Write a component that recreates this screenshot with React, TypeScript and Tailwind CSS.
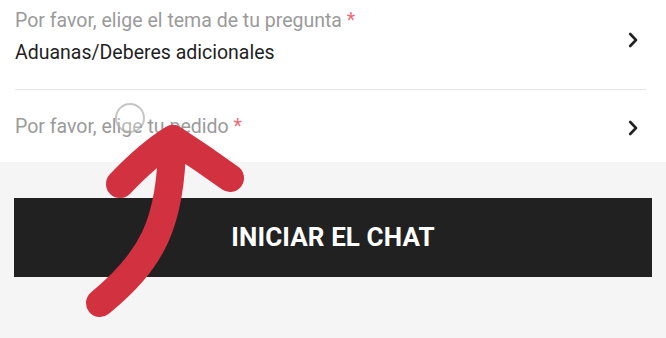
import React from 'react';

const Chevron = () => (
  <svg width="10" height="16" viewBox="0 0 10 16" className="shrink-0">
    <path d="M2.2 2 L8 8 L2.2 14" fill="none" stroke="#222" strokeWidth="2.6" strokeLinecap="round" strokeLinejoin="round" />
  </svg>
);

export default function App() {
  return (
    <div className="relative w-[666px] h-[338px] overflow-hidden bg-[#f5f5f5]" style={{ fontFamily: 'Roboto, "Liberation Sans", sans-serif' }}>
      {/* Form fields */}
      <div className="bg-white pl-[15px] pr-[20px]">
        <div className="flex items-center border-b border-[#e6e6e6] pt-[8px] pb-[23px]">
          <div className="flex-1">
            <div className="text-[19.5px] leading-[26px] text-[#9a9a9a]">
              Por favor, elige el tema de tu pregunta <span className="text-[#ef6b78]">*</span>
            </div>
            <div className="mt-[6px] text-[19.5px] leading-[26px] text-[#1f1f1f]">Aduanas/Deberes adicionales</div>
          </div>
          <div className="pr-[8px] mt-[6px]"><Chevron /></div>
        </div>
        <div className="flex items-center pt-[24px] pb-[22px]">
          <div className="flex-1 text-[19.5px] leading-[26px] text-[#9a9a9a]">
            Por favor, elige tu pedido <span className="text-[#ef6b78]">*</span>
          </div>
          <div className="pr-[8px] pt-[2px]"><Chevron /></div>
        </div>
      </div>

      {/* Button */}
      <div className="px-[14px] pt-[36px]">
        <button className="w-full h-[79px] bg-[#212121] text-white font-bold text-[26px] tracking-[0.1px]">
          INICIAR EL CHAT
        </button>
      </div>

      {/* Touch indicator */}
      <div className="absolute left-[115px] top-[103px] w-[30px] h-[30px] rounded-full border-[2px] border-[#9e9e9e]/60 bg-white/30" />

      {/* Hand-drawn arrow overlay */}
      <svg className="absolute left-0 top-0 pointer-events-none" width="666" height="338" viewBox="0 0 666 338">
        <g fill="none" stroke="#d23140" strokeWidth="28" strokeLinecap="round" strokeLinejoin="round">
          <path d="M100 303 C 150 262, 172 225, 172 140" />
          <path d="M120 184 C 138 165, 155 150, 173 139 C 190 150, 212 165, 230 178" />
        </g>
      </svg>
    </div>
  );
}
